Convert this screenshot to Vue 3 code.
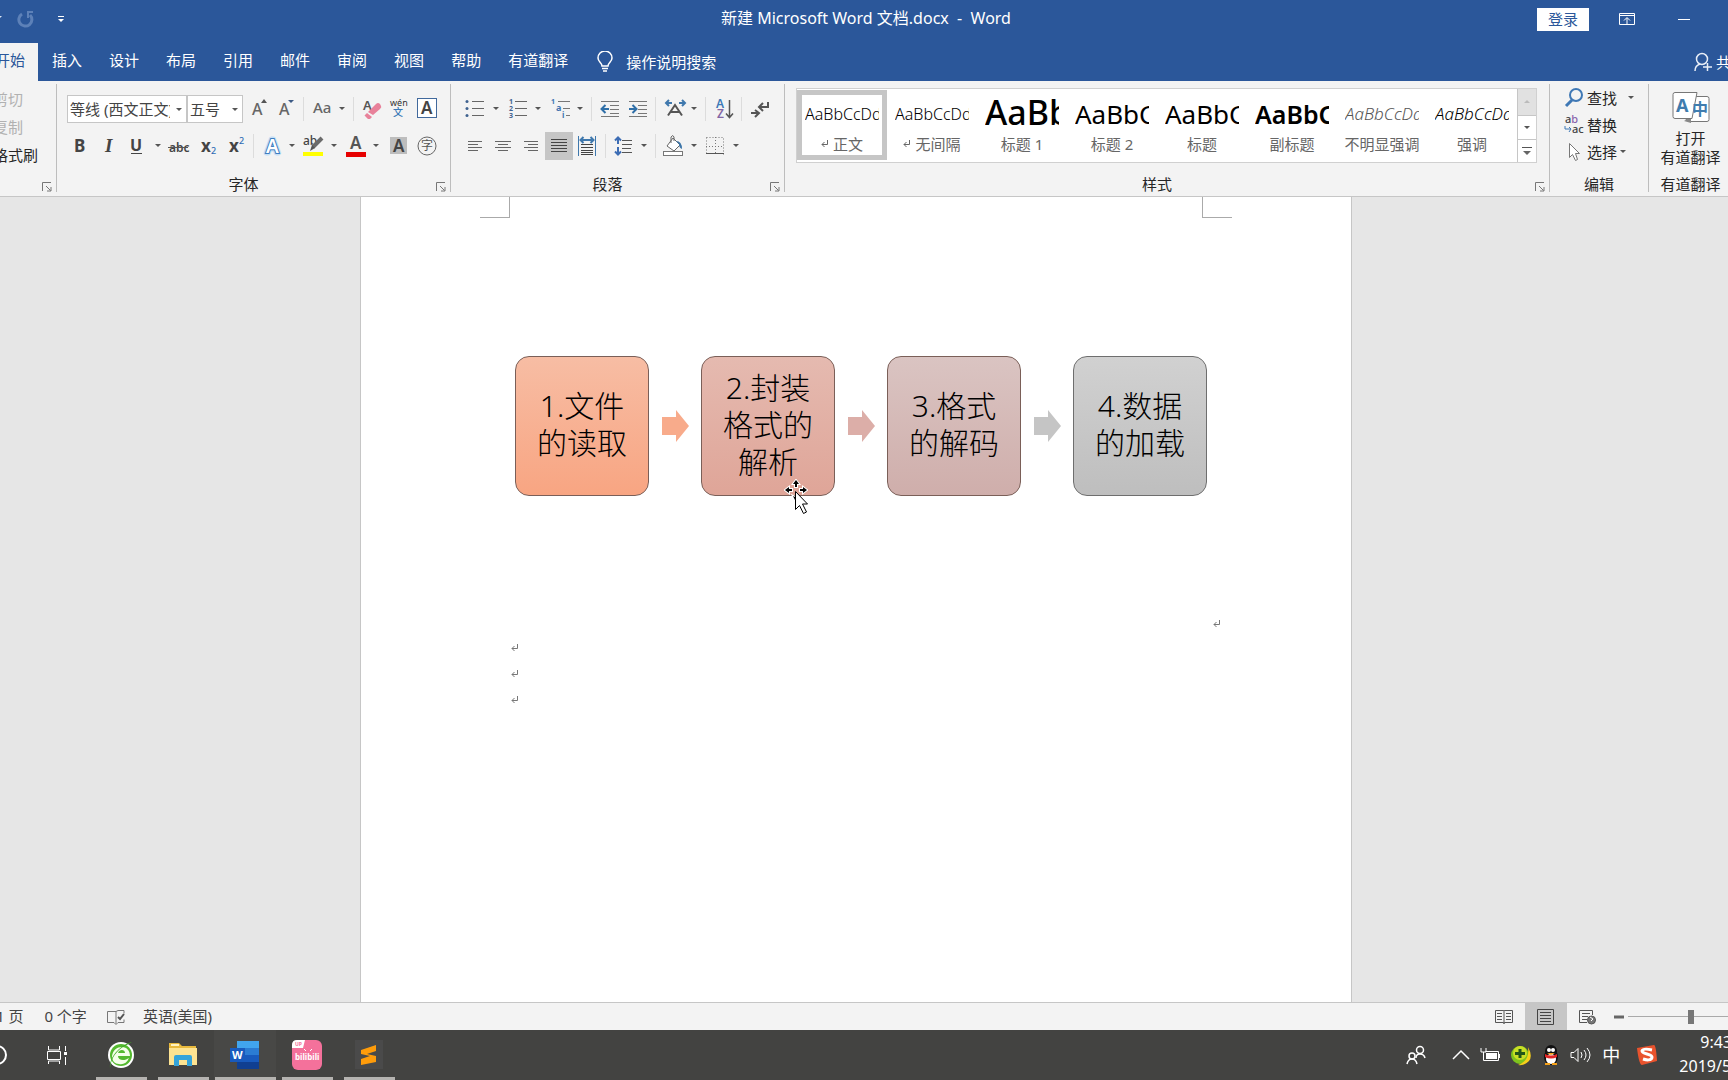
<script setup>
import { ref } from "vue";

const tabs = ["开始", "插入", "设计", "布局", "引用", "邮件", "审阅", "视图", "帮助", "有道翻译"];
const activeTab = ref("开始");
const fontName = ref("等线 (西文正文)");
const fontSize = ref("五号");
const activeStyle = ref("正文");
const zoom = ref(50);

// every toolbar icon is drawn on a 28 x 28 grid
const icons = {
  grow: '<text x="9" y="20" font-size="16" font-weight="500" fill="#666">A</text><path d="M18 8l3-4 3 4z" fill="#555"/>',
  shrink: '<text x="8" y="20" font-size="16" font-weight="500" fill="#666">A</text><path d="M17 5h6l-3 3z" fill="#3c5a85"/>',
  changeCase: '<text x="6" y="18" font-size="15" font-weight="500" fill="#666">Aa</text>',
  clear: '<text x="6" y="15" font-size="13" font-weight="600" fill="#555">A</text><path d="M11 17l8-8q2-2 4 0l1 2q1 1-1 3l-7 6z" fill="#e8819a"/><path d="M10 18l5 4-2 2h-2l-3-3q-1-1 0-1z" fill="#e8819a"/>',
  phonetic: '<text x="5" y="11" font-size="9" fill="#333">wén</text><text x="8" y="21" font-size="10" font-weight="500" fill="#3b79b7">文</text>',
  charBorder: '<rect x="4.500" y="3.500" width="19" height="19" fill="#fff" stroke="#41699c"/><text x="8" y="19" font-size="17" font-weight="600" fill="#444">A</text>',
  bold: '<text x="7" y="20" font-size="17" font-weight="700" fill="#444">B</text>',
  italic: '<text x="10" y="20" font-size="19" font-weight="700" font-style="italic" font-family="Liberation Serif" fill="#444">I</text>',
  underline: '<text x="7" y="19" font-size="16" font-weight="700" fill="#444">U</text><path d="M8 21.500h11" stroke="#444"/>',
  strike: '<text x="4" y="20" font-size="12" font-weight="600" fill="#444">abc</text><path d="M3 15.500h20" stroke="#555"/>',
  sub: '<text x="8" y="20" font-size="17" font-weight="700" fill="#444">x</text><text x="18" y="22" font-size="9" font-weight="500" fill="#2f6db5">2</text>',
  sup: '<text x="8" y="20" font-size="17" font-weight="700" fill="#444">x</text><text x="18" y="12" font-size="9" font-weight="500" fill="#2f6db5">2</text>',
  effects: '<text x="9" y="21" font-size="19" font-weight="500" fill="#fff" stroke="#c6dff5" stroke-width="5" stroke-linejoin="round">A</text><text x="9" y="21" font-size="19" font-weight="600" fill="#fff" stroke="#3e7dc0" stroke-width="2" paint-order="stroke">A</text>',
  highlight: '<rect x="4" y="20" width="20" height="4" fill="#ff0"/><text x="4" y="13" font-size="12" font-weight="500" fill="#444">ab</text><path d="M23 6l-9 9" stroke="#6b6b6b" stroke-width="4"/><path d="M13 13l3 3-5 3z" fill="#555"/>',
  fontColor: '<rect x="5" y="20" width="20" height="5" fill="#e60000"/><text x="9" y="17" font-size="17" font-weight="600" fill="#555">A</text>',
  shading: '<rect x="7" y="5" width="17" height="17" fill="#bdbdbd"/><text x="10" y="20" font-size="17" font-weight="600" fill="#444">A</text>',
  enclose: '<circle cx="16" cy="14" r="9" fill="none" stroke="#666"/><text x="10" y="18" font-size="12" fill="#555">字</text>',
  bullets: '<path d="M11 6.500h12M11 13.500h12M11 20.500h12" stroke="#666"/><g fill="#3f628f"><circle cx="6" cy="6.500" r="1.500"/><circle cx="6" cy="13.500" r="1.500"/><circle cx="6" cy="20.500" r="1.500"/></g>',
  numbers: '<path d="M12 6.500h12M12 13.500h12M12 20.500h12" stroke="#666"/><g font-size="7" font-weight="700" fill="#3f628f"><text x="6" y="9">1</text><text x="6" y="16">2</text><text x="6" y="23">3</text></g>',
  multi: '<path d="M13 6.500h12M18 13.500h7M21 20.500h4" stroke="#777"/><g font-weight="700" fill="#3f73b0"><text x="6" y="9" font-size="7">1</text><text x="11" y="16" font-size="9">a</text><text x="17" y="23" font-size="8">i</text></g>',
  outdent: '<path d="M6 6.500h18M15 10.500h9M15 14.500h9M15 18.500h9M6 21.500h18" stroke="#777"/><path d="M14 14H7M10.500 10L6.500 14l4 4" fill="none" stroke="#2f6fa8" stroke-width="2"/>',
  indent: '<path d="M6 6.500h18M15 10.500h9M15 14.500h9M15 18.500h9M6 21.500h18" stroke="#777"/><path d="M6 14h7M9.500 10l4 4-4 4" fill="none" stroke="#2f6fa8" stroke-width="2"/>',
  cjkLayout: '<path d="M9 20.500L16 10l7 10.500M11.500 17h9" fill="none" stroke="#555" stroke-width="2"/><path d="M13 8H8M10 5L7 8l3 3M20 8h5M23 5l3 3-3 3" fill="none" stroke="#3f78ad" stroke-width="2"/>',
  sort: '<text x="7" y="13" font-size="12" font-weight="600" fill="#3b79b7">A</text><text x="8" y="23" font-size="12" font-weight="600" fill="#8265a5">Z</text><path d="M20.500 5v17M17 18.500l3.500 4 3.500-4" fill="none" stroke="#555" stroke-width="1.500"/>',
  marks: '<path d="M23 7v5h-8M18 8l-4 4 4 4M6 18h7M10 15l4 3-4 4" fill="none" stroke="#555" stroke-width="2"/>',
  alignLeft: '<path d="M7 9.500h14M7 12.500h10M7 15.500h14M7 18.500h10" stroke="#666"/>',
  alignCenter: '<path d="M6 9.500h16M9 12.500h10M6 15.500h16M9 18.500h10" stroke="#666"/>',
  alignRight: '<path d="M7 9.500h14M11 12.500h10M7 15.500h14M11 18.500h10" stroke="#666"/>',
  justify: '<path d="M6 7.500h16M6 10.500h16M6 13.500h16M6 16.500h16M6 19.500h16" stroke="#444"/>',
  distribute: '<path d="M5.500 4v20M22.500 4v20" stroke="#3f78ad"/><path d="M8 12.500h12M8 15.500h12M8 18.500h12M8 20.500h12M8 22.500h12" stroke="#444"/><path d="M7 8h14M10.500 5L7.500 8l3 3M17.500 5l3 3-3 3" fill="none" stroke="#3f78ad" stroke-width="2"/>',
  spacing: '<path d="M13 8.500h10M13 12.500h10M13 16.500h9M13 20.500h10" stroke="#555"/><path d="M9 6v6M6 8.500l3-3 3 3M9 15v7M6 19.500l3 3 3-3" fill="none" stroke="#3c6cb4" stroke-width="2"/>',
  bucket: '<rect x="4.500" y="19.500" width="19" height="4" fill="#fff" stroke="#777"/><path d="M14 6l7 7-6 6-7-5z" fill="#fff" stroke="#666"/><path d="M12 11V5q2-3 3 0v4" fill="none" stroke="#666"/><path d="M17 9q6 0 6 8-3-1-3-5z" fill="#3d75a8"/>',
  borders: '<path d="M5.500 5.500h17v17M5.500 5.500v17M14.500 5v17M5 14.500h17" fill="none" stroke="#777" stroke-dasharray="1 2"/><path d="M5 21.500h18" stroke="#555"/>',
};

// "|" is a divider, "v" is a drop-down arrow
const fontRow = ["grow", "shrink", "|", "changeCase", "v", "|", "clear", "phonetic", "charBorder"];
const formatRow = ["bold", "italic", "underline", "v", "strike", "sub", "sup", "|", "effects", "v", "highlight", "v", "fontColor", "v", "shading", "enclose"];
const listRow = ["bullets", "v", "numbers", "v", "multi", "v", "|", "outdent", "indent", "|", "cjkLayout", "v", "|", "sort", "|", "marks"];
const alignRow = ["alignLeft", "alignCenter", "alignRight", "justify", "distribute", "|", "spacing", "v", "|", "bucket", "v", "borders", "v"];

const styles = [
  { name: "正文", sample: "AaBbCcDd", kind: "body", mark: true },
  { name: "无间隔", sample: "AaBbCcDd", kind: "body", mark: true },
  { name: "标题 1", sample: "AaBb", kind: "h1" },
  { name: "标题 2", sample: "AaBbC", kind: "h2" },
  { name: "标题", sample: "AaBbC", kind: "h2" },
  { name: "副标题", sample: "AaBbC", kind: "subtitle" },
  { name: "不明显强调", sample: "AaBbCcDd", kind: "subtle" },
  { name: "强调", sample: "AaBbCcDd", kind: "emphasis" },
];

const steps = [
  { lines: ["1.文件", "的读取"], kind: "orange", arrow: "#f8ab8b" },
  { lines: ["2.封装", "格式的", "解析"], kind: "rose", arrow: "#dcaea8" },
  { lines: ["3.格式", "的解码"], kind: "mauve", arrow: "#c5c5c5" },
  { lines: ["4.数据", "的加载"], kind: "grey" },
];
</script>

<template>
  <div class="word">
    <header class="titlebar">
      <div class="quick">
        <button class="plain" aria-label="撤消">
          <svg width="8" height="8"><path d="M0 1h7L3 5z" fill="#dbe5f3" /></svg>
        </button>
        <button class="plain" aria-label="重复">
          <svg width="18" height="20" fill="none" stroke="#5d81b8" stroke-width="3">
            <path d="M5 5a6.500 6.500 0 1 0 8 1" />
            <path d="M16 3h-5v6" stroke-width="2" />
          </svg>
        </button>
        <button class="plain" aria-label="自定义快速访问工具栏">
          <svg width="8" height="8"><path d="M1 1.500h6" stroke="#fff" /><path d="M1 4h6L4 7z" fill="#fff" /></svg>
        </button>
      </div>
      <h1>新建 Microsoft Word 文档.docx&nbsp; -&nbsp; Word</h1>
      <div class="window-tools">
        <button class="login">登录</button>
        <button class="plain" aria-label="功能区显示选项">
          <svg width="16" height="14" fill="none" stroke="#fff">
            <path d="M.5 1.500h15v11H.5zM.5 3.500h15M8 12V6M5 8.500l3-3 3 3" />
          </svg>
        </button>
        <button class="plain" aria-label="最小化">
          <svg width="12" height="14"><path d="M0 7.500h12" stroke="#fff" /></svg>
        </button>
      </div>
    </header>

    <nav class="tabs">
      <button
        v-for="tab in tabs"
        :key="tab"
        class="tab"
        :class="{ active: tab === activeTab }"
        @click="activeTab = tab"
      >
        {{ tab }}
      </button>
      <button class="tellme">
        <svg width="16" height="22" fill="none" stroke="#fff" stroke-width="1.500">
          <path d="M5 15c0-3-4-4-4-8a7 7 0 0 1 14 0c0 4-4 5-4 8zM5 17.500h6M6 20h4" />
        </svg>
        操作说明搜索
      </button>
      <button class="share">
        <svg width="18" height="20" fill="none" stroke="#e8eef7" stroke-width="1.500">
          <circle cx="8" cy="7" r="5.500" />
          <path d="M1 19c0-4 2-6 5-7M9 15h9M13.500 11v8" />
        </svg>
        共享
      </button>
    </nav>

    <section class="ribbon">
      <div class="group clipboard">
        <div class="clip-list">
          <button class="plain" disabled>剪切</button>
          <button class="plain" disabled>复制</button>
          <button class="plain">格式刷</button>
        </div>
        <footer>
          <span class="group-name"></span>
          <button class="launcher" aria-label="剪贴板">
            <svg width="10" height="10" fill="none" stroke="#777"><path d="M.5 9V.5H9M4 4l4.500 4.500M9 5v4H5" /></svg>
          </button>
        </footer>
      </div>

      <div class="group tools">
        <div class="rows">
          <div class="row">
            <div class="combo font-name">
              <select v-model="fontName" aria-label="字体">
                <option>等线 (西文正文)</option>
                <option>宋体</option>
              </select>
              <svg width="6" height="4"><path d="M0 0h6L3 3z" fill="#555" /></svg>
            </div>
            <div class="combo font-size">
              <select v-model="fontSize" aria-label="字号">
                <option>五号</option>
                <option>四号</option>
              </select>
              <svg width="6" height="4"><path d="M0 0h6L3 3z" fill="#555" /></svg>
            </div>
            <template v-for="(item, i) in fontRow" :key="i">
              <span v-if="item === '|'" class="divider"></span>
              <button v-else-if="item === 'v'" class="drop" aria-label="更多">
                <svg width="6" height="4"><path d="M0 0h6L3 3z" fill="#555" /></svg>
              </button>
              <button v-else class="tool" :aria-label="item">
                <svg width="28" height="28" v-html="icons[item]"></svg>
              </button>
            </template>
          </div>
          <div class="row">
            <template v-for="(item, i) in formatRow" :key="i">
              <span v-if="item === '|'" class="divider"></span>
              <button v-else-if="item === 'v'" class="drop" aria-label="更多">
                <svg width="6" height="4"><path d="M0 0h6L3 3z" fill="#555" /></svg>
              </button>
              <button v-else class="tool" :aria-label="item">
                <svg width="28" height="28" v-html="icons[item]"></svg>
              </button>
            </template>
          </div>
        </div>
        <footer>
          <span class="group-name">字体</span>
          <button class="launcher" aria-label="字体设置">
            <svg width="10" height="10" fill="none" stroke="#777"><path d="M.5 9V.5H9M4 4l4.500 4.500M9 5v4H5" /></svg>
          </button>
        </footer>
      </div>

      <div class="group tools paragraph">
        <div class="rows">
          <div v-for="(row, r) in [listRow, alignRow]" :key="r" class="row">
            <template v-for="(item, i) in row" :key="i">
              <span v-if="item === '|'" class="divider"></span>
              <button v-else-if="item === 'v'" class="drop" aria-label="更多">
                <svg width="6" height="4"><path d="M0 0h6L3 3z" fill="#555" /></svg>
              </button>
              <button v-else class="tool" :class="{ pressed: item === 'justify' }" :aria-label="item">
                <svg width="28" height="28" v-html="icons[item]"></svg>
              </button>
            </template>
          </div>
        </div>
        <footer>
          <span class="group-name">段落</span>
          <button class="launcher" aria-label="段落设置">
            <svg width="10" height="10" fill="none" stroke="#777"><path d="M.5 9V.5H9M4 4l4.500 4.500M9 5v4H5" /></svg>
          </button>
        </footer>
      </div>

      <div class="group style-group">
        <div class="gallery">
          <button
            v-for="s in styles"
            :key="s.name"
            class="style"
            :class="{ chosen: s.name === activeStyle }"
            @click="activeStyle = s.name"
          >
            <span class="sample" :class="s.kind">{{ s.sample }}</span>
            <span class="style-name">
              <svg v-if="s.mark" width="8" height="8" fill="none" stroke="#666"><path d="M6.500 0v4.500H1M3.500 2L1 4.500 3.500 7" /></svg>
              {{ s.name }}
            </span>
          </button>
          <div class="scroller">
            <button disabled aria-label="上一行"><svg width="6" height="4"><path d="M0 3h6L3 0z" fill="#bbb" /></svg></button>
            <button aria-label="下一行"><svg width="6" height="4"><path d="M0 0h6L3 3z" fill="#555" /></svg></button>
            <button aria-label="其他"><svg width="10" height="8"><path d="M0 .5h10" stroke="#555" /><path d="M1 4h8L5 8z" fill="#666" /></svg></button>
          </div>
        </div>
        <footer>
          <span class="group-name">样式</span>
          <button class="launcher" aria-label="样式设置">
            <svg width="10" height="10" fill="none" stroke="#777"><path d="M.5 9V.5H9M4 4l4.500 4.500M9 5v4H5" /></svg>
          </button>
        </footer>
      </div>

      <div class="group editing">
        <div class="edit-list">
          <button class="plain">
            <svg width="20" height="20" fill="none" stroke="#3f78b5"><circle cx="12" cy="7" r="6" stroke-width="2" /><path d="M8 12l-6 6" stroke-width="3" /></svg>
            查找
            <svg class="far" width="6" height="4"><path d="M0 0h6L3 3z" fill="#555" /></svg>
          </button>
          <button class="plain">
            <svg width="20" height="20">
              <text x="1" y="8" font-size="11" font-weight="500" fill="#444">a<tspan fill="#8a63ad">b</tspan></text>
              <text x="8" y="18" font-size="11" font-weight="500" fill="#444">ac</text>
              <path d="M1 11v3h6M5 12l2 2-2 3" fill="none" stroke="#3f78b5" />
            </svg>
            替换
          </button>
          <button class="plain">
            <svg width="20" height="20" fill="#fff" stroke="#777"><path d="M5.500 1.500v14l3-3 3 6 2-1-2-6h4z" /></svg>
            选择
            <svg class="near" width="6" height="4"><path d="M0 0h6L3 3z" fill="#555" /></svg>
          </button>
        </div>
        <footer><span class="group-name">编辑</span></footer>
      </div>

      <div class="group youdao">
        <button class="plain open">
          <svg width="38" height="32">
            <path d="M20 4.500h15q2 0 2 2v21q0 2-2 2H18l-5-3" fill="#fff" stroke="#777" />
            <path d="M12 29l7-4v6z" fill="#888" />
            <path d="M3 .5h22l-5 26H3q-2 0-2-2v-22q0-2 2-2z" fill="#fff" stroke="#777" />
            <text x="4" y="20" font-size="18" font-weight="700" fill="#3f7cae">A</text>
            <text x="20" y="23" font-size="16" font-weight="700" fill="#3f7cae">中</text>
          </svg>
          <span>打开</span>
          <span>有道翻译</span>
        </button>
        <footer><span class="group-name">有道翻译</span></footer>
      </div>
    </section>

    <main class="workspace">
      <article class="paper">
        <div class="corners"><i class="corner left"></i><i class="corner right"></i></div>
        <div class="body-text">
          <div class="diagram">
            <template v-for="step in steps" :key="step.kind">
              <div class="step" :class="step.kind">
                <span v-for="line in step.lines" :key="line">{{ line }}</span>
                <svg v-if="step.kind === 'rose'" class="pointer" width="24" height="36">
                  <g stroke="#fff" stroke-width="2" fill="#000" paint-order="stroke">
                    <path d="M12 1l3 4h-2v3h-2V5H9zM1 11l4-3v2h3v2H5v2zM23 11l-4-3v2h-3v2h3v2zM9 17l2 1v3z" />
                  </g>
                  <path d="M11.500 12.500v18l4-4 4 8 3-1.500-4-8h5z" fill="#fff" stroke="#000" />
                </svg>
              </div>
              <svg v-if="step.arrow" class="arrow" width="28" height="32">
                <path d="M1 7h14V0l13 16-13 16v-7H1z" :fill="step.arrow" />
              </svg>
            </template>
          </div>
          <p class="end"><svg width="8" height="8" fill="none" stroke="#777"><path d="M6.500 0v4.500H1M3.500 2L1 4.500 3.500 7" /></svg></p>
          <p v-for="n in 3" :key="n"><svg width="8" height="8" fill="none" stroke="#777"><path d="M6.500 0v4.500H1M3.500 2L1 4.500 3.500 7" /></svg></p>
        </div>
      </article>
    </main>

    <div class="statusbar">
      <span class="page-no">第 1 页</span>
      <span>0 个字</span>
      <button class="plain proof" aria-label="校对">
        <svg width="18" height="16" fill="none" stroke="#777"><path d="M9 2.500H.5v11H7l2 2 2-2h6v-3M9 2.500v12M9 2.500l2-1h6v3" /><path d="M11 8l2 2 4-5" stroke="#555" stroke-width="2" /></svg>
      </button>
      <span>英语(美国)</span>
      <div class="views">
        <button class="view" aria-label="阅读视图">
          <svg width="18" height="16" fill="none" stroke="#555"><path d="M8.500 1.500h-8v12h8l.5 1 .5-1h8v-12h-8zM9 1v14M2 4.500h5M2 7.500h5M2 10.500h5M11 4.500h5M11 7.500h5M11 10.500h5" /></svg>
        </button>
        <button class="view on" aria-label="页面视图">
          <svg width="18" height="16" fill="none" stroke="#444"><path d="M.5.500h16v15H.5zM3 3.500h11M3 6.500h11M3 9.500h11M3 12.500h11" /></svg>
        </button>
        <button class="view" aria-label="Web 版式视图">
          <svg width="18" height="16" fill="none" stroke="#555"><path d="M8 13.500H.5v-12h13V6M3 4.500h8M3 7.500h6M3 10.500h5" /><circle cx="12.500" cy="11" r="4" fill="#777" /><path d="M11 8l3 2-2 2" stroke="#fff" /></svg>
        </button>
        <button class="plain minus" aria-label="缩小"><svg width="10" height="4"><path d="M0 2h10" stroke="#666" stroke-width="3" /></svg></button>
        <input v-model="zoom" type="range" min="0" max="100" aria-label="显示比例" />
      </div>
    </div>

    <footer class="taskbar">
      <button class="app" aria-label="Cortana">
        <svg width="24" height="24"><circle cx="12" cy="12" r="9" fill="none" stroke="#fff" stroke-width="2" /></svg>
      </button>
      <button class="app" aria-label="任务视图">
        <svg width="24" height="20" fill="none" stroke="#fff"><path d="M1.500 1v4h11V1M.5 6.500h13v8H.5zM1.500 19v-3h11v3M18.500 1v5M18.500 12v8" /><path d="M17 7h3v3h-3z" fill="#fff" stroke="none" /></svg>
      </button>
      <button class="app open-app" aria-label="浏览器">
        <svg width="30" height="30">
          <circle cx="15" cy="15" r="13" fill="#fff" />
          <circle cx="15" cy="15" r="11" fill="#54b92f" />
          <path d="M6 16c1-6 5-9 10-9s8 4 8 9H12c0 5 7 5 11 2-2 5-6 7-10 6-4 0-7-3-7-8z" fill="#f4ffe9" />
          <path d="M12 13h7c0-4-6-4-7 0z" fill="#54b92f" />
          <path d="M4 28C3 16 16 4 26 2c-3 2-9 4-14 9S5 21 4 28z" fill="#3fa824" />
        </svg>
      </button>
      <button class="app open-app" aria-label="文件资源管理器">
        <svg width="30" height="28">
          <path d="M1 2h10l3 3h14v19H1z" fill="#e8b93c" />
          <path d="M3 3h8v2H3z" fill="#fff2c0" />
          <path d="M1 7h28v17H1z" fill="#fde391" />
          <path d="M6 25V16q0-2 2-2h14q2 0 2 2v9h-5v-6h-8v6z" fill="#35a4da" />
        </svg>
      </button>
      <button class="app open-app current" aria-label="Word">
        <svg width="30" height="28">
          <rect x="7" width="22" height="8" fill="#41a5ee" />
          <rect x="7" y="7" width="22" height="7" fill="#2b7cd3" />
          <rect x="7" y="14" width="22" height="7" fill="#185abd" />
          <rect x="7" y="21" width="22" height="7" fill="#103f91" />
          <rect y="7" width="15" height="14" fill="#185abd" />
          <text x="2" y="18" font-size="11" font-weight="700" fill="#fff">W</text>
        </svg>
      </button>
      <button class="app open-app" aria-label="bilibili">
        <svg width="30" height="30">
          <rect width="30" height="30" rx="6" fill="#f4719b" />
          <path d="M0 8V5q0-5 5-5h8l-2 8z" fill="#fff" />
          <text x="3" y="6" font-size="5" font-weight="700" fill="#f4719b">UP</text>
          <path d="M12 9l2 2M20 9l-2 2" stroke="#fff" />
          <text x="3" y="20" font-size="8" font-weight="700" fill="#fff">bilibili</text>
        </svg>
      </button>
      <button class="app open-app" aria-label="Sublime Text">
        <svg width="30" height="30"><rect x="1" width="28" height="29" fill="#4a4a4a" /><path d="M7 10l15-5v6l-9 3 9 2v6L7 25v-6l9-3-9-2z" fill="#ff9c0a" /></svg>
      </button>

      <div class="tray">
        <button class="plain people" aria-label="人脉">
          <svg width="20" height="20" fill="none" stroke="#fff" stroke-width="1.500"><circle cx="14" cy="5" r="3.500" /><path d="M10 13q0-4 4-4 4 0 5 4" /><circle cx="6" cy="11" r="3" /><path d="M1 19q1-5 5-5 4 0 5 5" /></svg>
        </button>
        <button class="plain" aria-label="显示隐藏的图标">
          <svg width="18" height="12" fill="none" stroke="#fff"><path d="M1 10l8-8 8 8" stroke-width="1.500" /></svg>
        </button>
        <button class="plain" aria-label="电池">
          <svg width="20" height="14" fill="none" stroke="#fff"><path d="M5.500 3.500h13v9H3.500V7M1 0v4h5V0M3.500 4v4" /><rect x="6" y="5" width="11" height="6" fill="#fff" stroke="none" /><path d="M19.500 6v4" /></svg>
        </button>
        <button class="plain" aria-label="安全卫士">
          <svg width="22" height="22"><circle cx="10" cy="11" r="9" fill="#7ec31d" /><path d="M8 21Q20 17 18 3q5 9 1 14-5 5-11 4z" fill="#f7cf1a" /><circle cx="10" cy="9" r="7" fill="#c9de25" /><path d="M10 5v9M5 9.500h10" stroke="#22551a" stroke-width="3" /></svg>
        </button>
        <button class="plain" aria-label="QQ">
          <svg width="18" height="20"><ellipse cx="9" cy="12" rx="7" ry="8" fill="#111" /><circle cx="9" cy="6" r="6" fill="#111" /><ellipse cx="9" cy="14" rx="5" ry="5" fill="#fff" /><path d="M3 9q6 3 12 0v3q-6 3-12 0z" fill="#e02424" /><circle cx="7" cy="5" r="2" fill="#fff" /><circle cx="11" cy="5" r="2" fill="#fff" /><path d="M5 8h8l-4 2z" fill="#f5a21b" /><path d="M3 18h5v2H3zM10 18h5v2h-5z" fill="#f5a21b" /></svg>
        </button>
        <button class="plain" aria-label="音量">
          <svg width="22" height="18" fill="none" stroke="#fff"><path d="M1 6.500h3l4-4v13l-4-4H1zM11 6q2 3 0 6M14 4q4 5 0 10M17 2q6 7 0 14" /></svg>
        </button>
        <button class="plain ime">中</button>
        <button class="plain" aria-label="搜狗输入法">
          <svg width="22" height="20"><path d="M1 3l17-3q2 0 3 16l-15 4q-3 0-5-17z" fill="#e9532d" /><path d="M16 5q-9-2-10 1c0 3 10 3 10 6 0 4-6 3-9 2" fill="none" stroke="#fff" stroke-width="3" /></svg>
        </button>
        <div class="clock"><time class="hour">9:43</time><time>2019/5/</time></div>
      </div>
    </footer>
  </div>
</template>

<style>
body {
  overflow: hidden;
}
</style>

<style scoped>
.word {
  display: flex;
  flex-direction: column;
  height: 100vh;
  overflow: hidden;
  font-family: "Noto Sans", "Noto Sans CJK SC", sans-serif;
  font-size: 15px;
  line-height: 20px;
  color: #262626;
}
.word * {
  box-sizing: border-box;
}
button,
select {
  font: inherit;
  color: inherit;
  margin: 0;
  padding: 0;
  border: 0;
  background: none;
  white-space: nowrap;
}
svg {
  display: block;
  flex: none;
}
.plain {
  display: flex;
  align-items: center;
}

/* title bar */
.titlebar {
  display: grid;
  grid-template-columns: 1fr auto 1fr;
  height: 43px;
  padding-bottom: 5px;
  align-items: center;
  background: #2b579a;
  color: #fff;
}
.titlebar h1 {
  margin: 0;
  padding: 0 0 2px 4px;
  font-size: 16px;
  font-weight: 400;
}
.quick {
  display: flex;
  align-items: center;
  margin-left: -5px;
}
.quick button + button {
  margin-left: 14px;
}
.quick button:last-child {
  margin-left: 22px;
}
.window-tools {
  display: flex;
  justify-content: flex-end;
  align-items: center;
  padding-right: 38px;
}
.login {
  width: 52px;
  height: 23px;
  margin-right: 30px;
  background: #fff;
  color: #2b579a;
}
.window-tools .plain + .plain {
  margin-left: 43px;
}

/* tabs */
.tabs {
  display: flex;
  gap: 1px;
  height: 38px;
  background: #2b579a;
  color: #fff;
}
.tab {
  padding: 0 13px 4px;
}
.tab:first-child {
  margin-left: -18px;
}
.tab.active {
  background: #f3f3f3;
  color: #2b579a;
}
.tellme,
.share {
  display: flex;
  align-items: center;
  gap: 13px;
  margin-left: 15px;
  padding-bottom: 1px;
}
.share {
  gap: 4px;
  margin-left: auto;
  margin-right: -18px;
}

/* ribbon */
.ribbon {
  display: flex;
  height: 116px;
  padding: 3px 0 4px;
  background: #f3f3f3;
  border-bottom: 1px solid #c6c6c6;
}
.group {
  display: flex;
  flex-direction: column;
  justify-content: space-between;
  flex: none;
  border-right: 1px solid #bdbdbd;
}
.group footer {
  display: flex;
  align-items: flex-end;
  line-height: 14px;
}
.group-name {
  flex: 1;
  padding-bottom: 1px;
  text-align: center;
}
.launcher {
  width: 20px;
  padding-left: 6px;
}
.clipboard {
  width: 57px;
}
.clip-list {
  display: grid;
  grid-auto-rows: 28px;
  padding-top: 1px;
  margin-left: -7px;
}
.clip-list button:disabled {
  color: #b1b1b1;
}
.tools {
  width: 394px;
}
.paragraph {
  width: 334px;
}
.rows {
  display: grid;
  gap: 9px;
  padding: 11px 0 0 10px;
}
.row {
  display: flex;
  height: 28px;
}
.tool {
  width: 28px;
  height: 28px;
}
.tool.pressed {
  background: #c6c6c6;
}
.drop {
  width: 14px;
  padding-left: 4px;
}
.divider {
  width: 8px;
  background: linear-gradient(#dcdcdc, #dcdcdc) center / 1px 24px no-repeat;
}
.combo {
  position: relative;
  height: 28px;
  background: #fff;
  border: 1px solid #c6c6c6;
}
.combo select {
  width: 100%;
  height: 26px;
  padding: 0 16px 0 2px;
  appearance: none;
  color: #444;
}
.combo svg {
  position: absolute;
  right: 4px;
  top: 12px;
  pointer-events: none;
}
.font-name {
  width: 120px;
}
.font-size {
  width: 56px;
}

.style-group {
  flex: 1;
  min-width: 0;
}
.gallery {
  display: flex;
  height: 75px;
  margin: 4px 12px 0 11px;
  background: #fff;
  border: 1px solid #d0d0d0;
}
.style {
  display: flex;
  flex-direction: column;
  flex: 1;
  min-width: 0;
  height: 70px;
  margin-top: 1px;
  padding: 0 3px;
  border: 5px solid transparent;
}
.style.chosen {
  border-color: #c6c6c6;
}
.sample {
  display: block;
  height: 39px;
  line-height: 38px;
  overflow: hidden;
  text-align: left;
  color: #000;
}
.body,
.subtle,
.emphasis {
  font-size: 16px;
  font-weight: 300;
}
.subtle,
.emphasis {
  font-size: 17px;
  font-style: italic;
}
.subtle {
  color: #555;
}
.h1 {
  font-size: 34px;
  font-weight: 500;
  line-height: 34px;
}
.h2 {
  font-size: 26px;
}
.subtitle {
  font-size: 25px;
  font-weight: 600;
}
.style-name {
  display: flex;
  justify-content: center;
  align-items: center;
  gap: 4px;
  color: #666;
}
.scroller {
  display: grid;
  grid-template-rows: 26px 24px 23px;
  width: 19px;
  border-left: 1px solid #c6c6c6;
}
.scroller button {
  display: grid;
  place-items: center;
}
.scroller button:disabled {
  background: #e1e1e1;
}
.scroller button + button {
  border-top: 1px solid #c6c6c6;
}

.editing {
  width: 99px;
}
.edit-list {
  display: grid;
  grid-auto-rows: 27px;
  padding-left: 14px;
}
.edit-list .plain {
  gap: 3px;
}
.edit-list .far {
  margin-left: 8px;
}
.youdao {
  width: 83px;
  margin-right: -4px;
  border-right: 0;
}
.open {
  flex-direction: column;
  padding-top: 8px;
  line-height: 19px;
}
.open svg {
  margin-bottom: 5px;
}

/* document */
.workspace {
  display: flex;
  justify-content: center;
  flex: 1;
  min-height: 0;
  padding-right: 16px;
  background: #e6e6e6;
}
.paper {
  width: 992px;
  background: #fff;
  border: solid #c6c6c6;
  border-width: 0 1px;
}
.corners {
  display: flex;
  justify-content: space-between;
  padding: 0 119px;
}
.corner {
  width: 30px;
  height: 21px;
  border-bottom: 1px solid #aaa;
}
.corner.left {
  border-right: 1px solid #aaa;
}
.corner.right {
  border-left: 1px solid #aaa;
}
.body-text {
  padding: 138px 130px 0 149px;
}
.diagram {
  display: flex;
  align-items: center;
  gap: 12px;
  height: 140px;
  padding-left: 5px;
}
.step {
  position: relative;
  display: flex;
  flex-direction: column;
  justify-content: center;
  align-items: center;
  width: 134px;
  height: 140px;
  padding-bottom: 4px;
  border: 1px solid #7a5f58;
  border-radius: 14px;
  font-size: 30px;
  font-weight: 300;
  line-height: 37px;
  color: #000;
}
.orange {
  background: linear-gradient(#f7bda4, #f8a582);
}
.rose {
  background: linear-gradient(#e5bab0, #dfa598);
}
.mauve {
  background: linear-gradient(#dac4c2, #cfaeab);
}
.grey {
  background: linear-gradient(#d1d1d1, #bebebe);
  border-color: #6e6e6e;
}
.pointer {
  position: absolute;
  left: 82px;
  top: 122px;
}
.body-text p {
  height: 26px;
  margin: 0;
  padding: 14px 0 0 1px;
}
.body-text .end {
  display: flex;
  justify-content: flex-end;
  align-items: flex-end;
  height: 134px;
  padding: 0 0 2px;
}

/* status bar */
.statusbar {
  display: flex;
  align-items: center;
  height: 28px;
  background: #f3f3f3;
  border-top: 1px solid #c6c6c6;
  color: #444;
  white-space: nowrap;
}
.statusbar span {
  padding-bottom: 2px;
}
.page-no {
  margin: 0 21px 0 -23px;
}
.proof {
  margin: 0 18px 0 20px;
}
.views {
  display: flex;
  align-items: center;
  height: 100%;
  margin-left: auto;
  margin-right: -26px;
}
.view {
  display: grid;
  place-items: center;
  width: 42px;
  height: 100%;
}
.view.on {
  background: #c6c6c6;
}
.minus {
  margin: 0 4px 0 5px;
}
input[type="range"] {
  width: 126px;
  height: 14px;
  margin: 0;
  appearance: none;
  background: linear-gradient(#aaa, #aaa) center / 100% 1px no-repeat;
}
input[type="range"]::-webkit-slider-thumb {
  appearance: none;
  width: 6px;
  height: 14px;
  background: #777;
}

/* taskbar */
.taskbar {
  display: flex;
  height: 50px;
  background: #434341;
  color: #fff;
}
.app {
  display: grid;
  place-items: center;
  width: 62px;
}
.app:first-child {
  margin-left: -34px;
}
.open-app {
  background: linear-gradient(#b5b3b0, #b5b3b0) bottom / 51px 3px no-repeat;
}
.open-app.current {
  background: linear-gradient(#b5b3b0, #b5b3b0) bottom / 61px 3px no-repeat #484846;
}
.tray {
  display: flex;
  align-items: center;
  gap: 10px;
  margin-left: auto;
}
.people {
  margin-right: 16px;
}
.ime {
  margin: 0 6px 0 0;
  font-size: 18px;
}
.clock {
  display: flex;
  flex-direction: column;
  align-items: flex-end;
  gap: 4px;
  margin-left: 11px;
  margin-right: -9px;
  padding-bottom: 2px;
  font-size: 16px;
}
.hour {
  padding-right: 5px;
}
</style>
